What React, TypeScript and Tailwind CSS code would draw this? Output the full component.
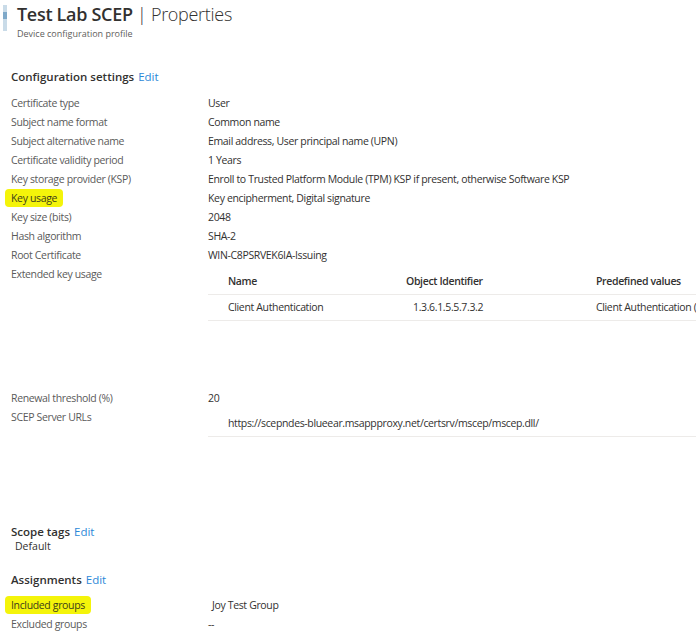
const font = { fontFamily: '"Open Sans", "Noto Sans", sans-serif' };

const rows: [string, string][] = [
  ['Certificate type', 'User'],
  ['Subject name format', 'Common name'],
  ['Subject alternative name', 'Email address, User principal name (UPN)'],
  ['Certificate validity period', '1 Years'],
  ['Key storage provider (KSP)', 'Enroll to Trusted Platform Module (TPM) KSP if present, otherwise Software KSP'],
  ['Key usage', 'Key encipherment, Digital signature'],
  ['Key size (bits)', '2048'],
  ['Hash algorithm', 'SHA-2'],
  ['Root Certificate', 'WIN-C8PSRVEK6IA-Issuing'],
];

function Highlight({ children }: { children: React.ReactNode }) {
  return (
    <span className="-mx-[6px] rounded-[4px] bg-[#f4f40a] px-[6px] py-[2px] text-[#3c3c1a]">{children}</span>
  );
}

function SectionTitle({ title }: { title: string }) {
  return (
    <div className="flex items-baseline gap-[4px] text-[11.5px] leading-[16px]">
      <span className="font-semibold text-[#323130]">{title}</span>
      <span className="text-[#2b88d8]">Edit</span>
    </div>
  );
}

function Row({ label, value }: { label: React.ReactNode; value: React.ReactNode }) {
  return (
    <div className="flex h-[19px] items-center text-[10.5px] tracking-[-0.35px]">
      <div className="w-[197px] shrink-0 text-[#5a5a5a]">{label}</div>
      <div className="whitespace-nowrap text-[#323130]">{value}</div>
    </div>
  );
}

export default function App() {
  return (
    <div className="h-[643px] w-[696px] overflow-hidden bg-white" style={font}>
      {/* Header */}
      <div className="flex pt-[3px]">
        <div className="ml-[3px] mt-[2px] flex h-[26px] w-[4px] flex-col">
          <div className="h-[7px] bg-[#c9dbe8]" />
          <div className="h-[7px] bg-[#7fa9c9]" />
          <div className="flex-1 bg-[#c9dbe8]" />
        </div>
        <div className="ml-[10px]">
          <div className="whitespace-nowrap text-[18px] leading-[23px] tracking-[-0.3px] text-[#323130]">
            <span className="font-semibold">Test Lab SCEP</span>
            <span className="font-light"> | Properties</span>
          </div>
          <div className="mt-[1px] text-[9px] leading-[13px] text-[#605e5c]">Device configuration profile</div>
        </div>
      </div>

      <div className="pl-[11px]">
        <div className="mt-[29px]">
          <SectionTitle title="Configuration settings" />
        </div>

        <div className="mt-[9px]">
          {rows.map(([l, v]) => (
            <Row key={l} label={l === 'Key usage' ? <Highlight>{l}</Highlight> : l} value={v} />
          ))}
          <div className="flex text-[10.5px] tracking-[-0.35px]">
            <div className="flex h-[19px] w-[197px] shrink-0 items-center text-[#5a5a5a]">Extended key usage</div>
            <div className="min-w-0 flex-1 overflow-hidden whitespace-nowrap text-[#323130]">
              <div className="flex h-[30px] items-end border-b border-[#edebe9] pb-[4px] pl-[20px] font-semibold">
                <div className="w-[178px] shrink-0">Name</div>
                <div className="w-[190px] shrink-0">Object Identifier</div>
                <div className="shrink-0">Predefined values</div>
              </div>
              <div className="flex h-[26px] items-center border-b border-[#edebe9] pl-[20px]">
                <div className="w-[185px] shrink-0">Client Authentication</div>
                <div className="w-[183px] shrink-0">1.3.6.1.5.5.7.3.2</div>
                <div className="shrink-0">Client Authentication (</div>
              </div>
            </div>
          </div>
        </div>

        <div className="mt-[68px]">
          <Row label="Renewal threshold (%)" value="20" />
          <div className="flex text-[10.5px] tracking-[-0.35px]">
            <div className="flex h-[19px] w-[197px] shrink-0 items-center text-[#5a5a5a]">SCEP Server URLs</div>
            <div className="flex-1 whitespace-nowrap border-b border-[#edebe9] pb-[3px] pl-[20px] pt-[6px] leading-[19px] text-[#323130]">
              https://scepndes-blueear.msappproxy.net/certsrv/mscep/mscep.dll/
            </div>
          </div>
        </div>

        <div className="mt-[87px]">
          <SectionTitle title="Scope tags" />
          <div className="ml-[4px] text-[10.5px] leading-[13px] text-[#323130]">Default</div>
        </div>

        <div className="mt-[19px]">
          <SectionTitle title="Assignments" />
        </div>
        <div className="mt-[8px]">
          <Row label={<Highlight>Included groups</Highlight>} value={<span className="ml-[4px]">Joy Test Group</span>} />
          <Row label="Excluded groups" value="--" />
        </div>
      </div>
    </div>
  );
}
